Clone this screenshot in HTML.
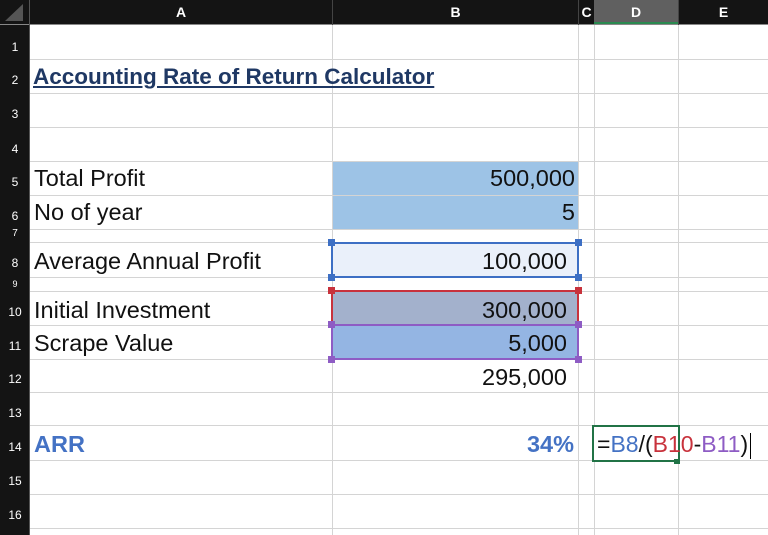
<!DOCTYPE html>
<html><head><style>
*{margin:0;padding:0;box-sizing:border-box}
body{width:768px;height:535px;overflow:hidden;background:#fff;font-family:"Liberation Sans",sans-serif;position:relative}
.a{position:absolute}
.hl{position:absolute;left:30px;width:738px;height:1px;background:#d4d4d4}
.vl{position:absolute;top:25px;width:1px;height:510px;background:#d4d4d4}
.rh{position:absolute;left:0;width:30px;color:#fff;font-size:12px;text-align:center}
.ch{position:absolute;top:0;height:25px;line-height:24px;color:#fff;font-size:14px;text-align:center;font-weight:bold}
.t{position:absolute;font-size:23.5px;color:#111;line-height:34px;white-space:nowrap}
.r{text-align:right}
.h{position:absolute;width:7px;height:7px}
</style></head><body>
<div class="a" style="left:0;top:0;width:768px;height:25px;background:#141414"></div>
<div class="a" style="left:0;top:25px;width:30px;height:510px;background:#141414"></div>
<div class="a" style="left:594px;top:0;width:84px;height:24px;background:#606060;border-bottom:2px solid #2a8a50"></div>
<div class="a" style="left:0;top:24px;width:768px;height:1px;background:#888"></div>
<div class="a" style="left:29px;top:0;width:1px;height:535px;background:#555"></div>
<div class="a" style="left:5px;top:4px;width:0;height:0;border-left:18px solid transparent;border-bottom:17px solid #555"></div>
<div class="ch" style="left:30px;width:302px">A</div>
<div class="ch" style="left:332px;width:246px;border-left:1px solid #444">B</div>
<div class="ch" style="left:578px;width:16px;border-left:1px solid #444">C</div>
<div class="ch" style="left:594px;width:84px">D</div>
<div class="ch" style="left:678px;width:90px;border-left:1px solid #444">E</div>
<div class="a" style="left:332px;top:161px;width:246px;height:68px;background:#9dc3e6"></div>
<div class="a" style="left:332px;top:242px;width:246px;height:35px;background:#eaf0fa"></div>
<div class="a" style="left:332px;top:291px;width:246px;height:33px;background:#a3b1cc"></div>
<div class="a" style="left:332px;top:324px;width:246px;height:35px;background:#94b5e3"></div>
<div class="hl" style="top:59px"></div><div class="hl" style="top:93px"></div><div class="hl" style="top:127px"></div><div class="hl" style="top:161px"></div><div class="hl" style="top:195px"></div><div class="hl" style="top:229px"></div><div class="hl" style="top:242px"></div><div class="hl" style="top:277px"></div><div class="hl" style="top:291px"></div><div class="hl" style="top:325px"></div><div class="hl" style="top:359px"></div><div class="hl" style="top:392px"></div><div class="hl" style="top:425px"></div><div class="hl" style="top:460px"></div><div class="hl" style="top:494px"></div><div class="hl" style="top:528px"></div>
<div class="vl" style="left:332px"></div><div class="vl" style="left:578px"></div><div class="vl" style="left:594px"></div><div class="vl" style="left:678px"></div>
<div class="rh" style="top:40px">1</div><div class="rh" style="top:73px">2</div><div class="rh" style="top:107px">3</div><div class="rh" style="top:142px">4</div><div class="rh" style="top:175px">5</div><div class="rh" style="top:209px">6</div><div class="rh" style="top:228px;font-size:10px">7</div><div class="rh" style="top:256px">8</div><div class="rh" style="top:279px;font-size:9px">9</div><div class="rh" style="top:305px">10</div><div class="rh" style="top:339px">11</div><div class="rh" style="top:372px">12</div><div class="rh" style="top:406px">13</div><div class="rh" style="top:440px">14</div><div class="rh" style="top:474px">15</div><div class="rh" style="top:508px">16</div>
<div class="t" style="left:33px;top:60px;font-size:22.5px;font-weight:bold;color:#1f3864;text-decoration:underline">Accounting Rate of Return Calculator</div>
<div class="t" style="left:34px;top:161px">Total Profit</div>
<div class="t" style="left:34px;top:195px">No of year</div>
<div class="t" style="left:34px;top:244px">Average Annual Profit</div>
<div class="t" style="left:34px;top:293px">Initial Investment</div>
<div class="t" style="left:34px;top:326px">Scrape Value</div>
<div class="t" style="left:34px;top:427px;font-weight:bold;color:#4472c4">ARR</div>
<div class="t r" style="left:332px;width:243px;top:161px">500,000</div>
<div class="t r" style="left:332px;width:243px;top:195px">5</div>
<div class="t r" style="left:332px;width:235px;top:244px">100,000</div>
<div class="t r" style="left:332px;width:235px;top:293px">300,000</div>
<div class="t r" style="left:332px;width:235px;top:326px">5,000</div>
<div class="t r" style="left:332px;width:235px;top:360px">295,000</div>
<div class="t r" style="left:332px;width:242px;top:427px;font-weight:bold;color:#4472c4">34%</div>
<div class="a" style="left:331px;top:242px;width:248px;height:36px;border:2px solid #3d6fc4"></div>
<div class="a" style="left:331px;top:290px;width:248px;height:36px;border:2px solid #c8323c;border-bottom:none"></div>
<div class="a" style="left:331px;top:324px;width:248px;height:36px;border:2px solid #8e5cc4"></div>
<div class="h" style="left:328px;top:239px;background:#3d6fc4"></div><div class="h" style="left:575px;top:239px;background:#3d6fc4"></div><div class="h" style="left:328px;top:274px;background:#3d6fc4"></div><div class="h" style="left:575px;top:274px;background:#3d6fc4"></div>
<div class="h" style="left:328px;top:287px;background:#c8323c"></div><div class="h" style="left:575px;top:287px;background:#c8323c"></div>
<div class="h" style="left:328px;top:321px;background:#8e5cc4"></div><div class="h" style="left:575px;top:321px;background:#8e5cc4"></div><div class="h" style="left:328px;top:356px;background:#8e5cc4"></div><div class="h" style="left:575px;top:356px;background:#8e5cc4"></div>
<div class="a" style="left:592px;top:425px;width:88px;height:37px;border:2px solid #217346;background:#fff"></div>
<div class="a" style="left:674px;top:459px;width:6px;height:5px;background:#217346"></div>
<div class="t" style="left:597px;top:427px;font-size:23px"><span>=</span><span style="color:#4472c4">B8</span>/(<span style="color:#c8323c">B10</span>-<span style="color:#8e5cc4">B11</span>)<span style="display:inline-block;width:1px;height:26px;background:#000;vertical-align:middle;margin-left:2px"></span></div>
</body></html>
